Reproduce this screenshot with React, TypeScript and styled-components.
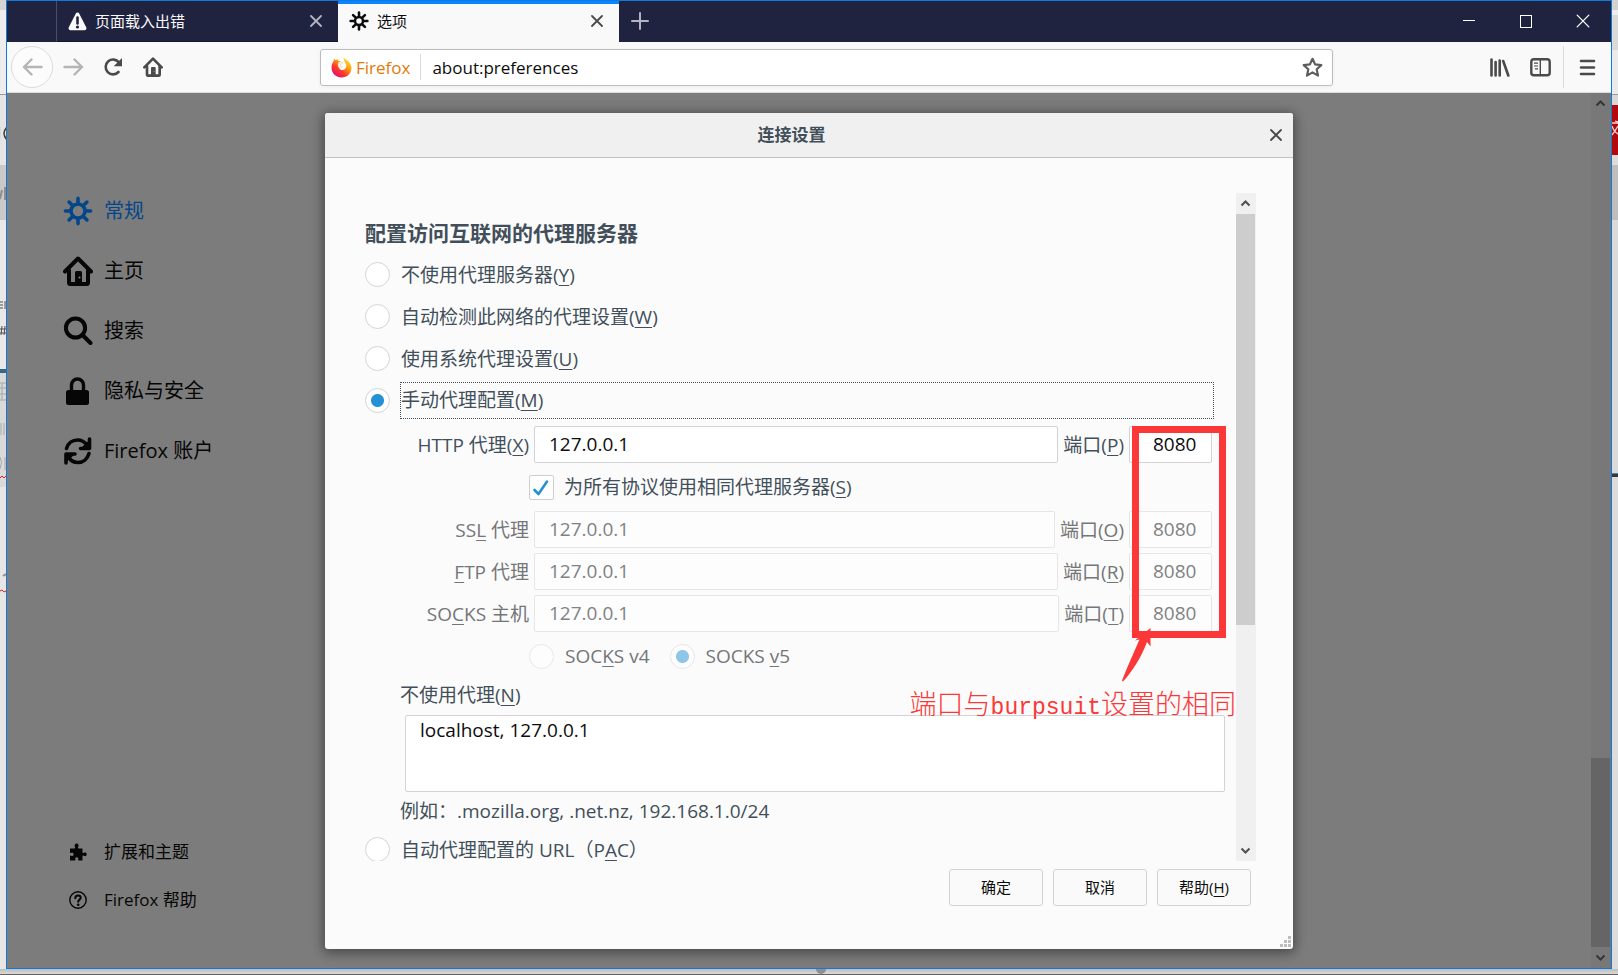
import React from "react";
import styled, { createGlobalStyle, css } from "styled-components";

const GlobalStyle = createGlobalStyle`
  *, *::before, *::after { box-sizing: border-box; }
  body {
    margin: 0;
    background: #e2e2e2;
    font-family: "Open Sans", "Noto Sans CJK SC", sans-serif;
    color: #424f5a;
  }
  button, input, textarea { font: inherit; color: inherit; margin: 0; }
  u { text-decoration-thickness: 1px; text-underline-offset: 3px; }
`;

/* ---------- desktop behind the window ---------- */

const Desktop = styled.div`
  height: 100vh;
  display: grid;
  grid-template-columns: 6px minmax(0, 1fr) 6px;
  grid-template-rows: minmax(0, 1fr) 6px;
  overflow: hidden;
`;

const EdgeStrip = styled.div`
  display: flex;
  flex-direction: column;
  overflow: hidden;
`;

const EdgeBlock = styled.div<{ $h?: number; $bg: string }>`
  ${(p) => (p.$h ? css`flex: 0 0 ${p.$h}px;` : css`flex: 1;`)}
  background: ${(p) => p.$bg};
  overflow: hidden;
`;

const EdgeArt = styled.svg`
  display: block;
`;

const BottomStrip = styled.div`
  grid-column: 1 / -1;
  display: flex;
  justify-content: center;
  background: linear-gradient(#bdbdbd, #dadada);
  border-bottom: 1px solid #606264;
`;

const BottomKnob = styled.i`
  width: 10px;
  height: 5px;
  margin-left: 24px;
  border-radius: 0 0 5px 5px;
  background: #8e8e8e;
`;

/* ---------- browser window ---------- */

const BrowserWindow = styled.div`
  display: flex;
  flex-direction: column;
  border: 1px solid #0f7bd8;
  background: #7c7c7c;
`;

const TabStrip = styled.header`
  flex: 0 0 41px;
  display: flex;
  background: #202340;
  padding-left: 49px;
`;

const Tab = styled.div<{ $active?: boolean }>`
  width: 282px;
  display: flex;
  align-items: center;
  gap: 8px;
  padding: 0 10px 0 11px;
  font-size: 15px;
  line-height: 20px;
  ${(p) =>
    p.$active
      ? css`
          width: 281px;
          background: #f9f9fa;
          color: #0c0c0d;
          border-bottom: 1px solid #f9f9fa;
          box-shadow: inset 0 3px 0 #0a84ff;
        `
      : css`
          color: #f9f9fa;
          border-left: 1px solid #4b4d66;
          border-bottom: 1px solid #14162c;
        `}
`;

const TabTitle = styled.span`
  flex: 1;
`;

const IconButton = styled.button<{ $w?: number; $h?: number; $color?: string }>`
  width: ${(p) => p.$w ?? 40}px;
  height: ${(p) => p.$h ?? 40}px;
  flex: none;
  padding: 0;
  border: 0;
  background: none;
  color: ${(p) => p.$color ?? "#4a4a4b"};
  display: flex;
  align-items: center;
  justify-content: center;
`;

const StripSpace = styled.div`
  flex: 1;
`;

const Toolbar = styled.div`
  flex: 0 0 51px;
  display: flex;
  align-items: center;
  padding: 0 4px;
  background: #f9f9fa;
  border-bottom: 1px solid #dcdcdd;
`;

const BackButton = styled(IconButton)`
  border: 1px solid #dcdcdc;
  border-radius: 50%;
  background: #fcfcfc;
`;

const ToolbarSpring = styled.div`
  flex: 147 1 0;
`;

const UrlBar = styled.div`
  flex: 992 1 0;
  height: 37px;
  display: flex;
  align-items: center;
  padding: 0 9px 0 10px;
  background: #fff;
  border: 1px solid #bdbdbe;
  border-radius: 3px;
  box-shadow: 0 1px 4px rgba(0, 0, 0, 0.06);
  font-size: 17px;
`;

const Identity = styled.div`
  display: flex;
  align-items: center;
  gap: 4px;
  height: 26px;
  padding-right: 10px;
  border-right: 1px solid #d9d9da;
  color: #e27a08;
`;

const UrlInput = styled.input`
  flex: 1;
  min-width: 0;
  height: 30px;
  border: 0;
  outline: 0;
  padding: 0 11px;
  background: none;
  color: #0c0c0d;
`;

const ToolbarDivider = styled.div`
  width: 1px;
  height: 42px;
  margin: 0 3px;
  background: #dcdcdd;
`;

/* ---------- preferences page ---------- */

const Stage = styled.main`
  flex: 1;
  min-height: 0;
  position: relative;
  display: flex;
  justify-content: space-between;
`;

const Sidebar = styled.nav`
  display: flex;
  flex-direction: column;
  justify-content: space-between;
  padding: 88px 0 44px 55px;
`;

const NavList = styled.div`
  display: flex;
  flex-direction: column;
`;

const NavLink = styled.a<{ $current?: boolean; $small?: boolean }>`
  display: flex;
  align-items: center;
  gap: 10px;
  height: ${(p) => (p.$small ? 48 : 60)}px;
  font-size: ${(p) => (p.$small ? 17 : 20)}px;
  line-height: 28px;
  color: ${(p) => (p.$current ? "#05468a" : "#060606")};
  text-decoration: none;
`;

const NavIcon = styled.span`
  width: 32px;
  display: flex;
  justify-content: center;
`;

const ScrollTrack = styled.div<{ $bg: string; $color: string }>`
  flex: 0 0 20px;
  display: flex;
  flex-direction: column;
  background: ${(p) => p.$bg};
  color: ${(p) => p.$color};
`;

const ScrollPart = styled.div<{ $grow: number; $bg?: string }>`
  flex: ${(p) => p.$grow} 1 0;
  margin-right: 1px;
  background: ${(p) => p.$bg ?? "transparent"};
`;

/* ---------- dialog ---------- */

const DialogLayer = styled.div`
  position: absolute;
  inset: 0;
  display: flex;
  justify-content: center;
  padding: 20px 20px 19px;
  pointer-events: none;
`;

const Dialog = styled.section`
  width: 100%;
  max-width: 968px;
  position: relative;
  display: flex;
  flex-direction: column;
  background: #fbfbfb;
  border-radius: 3px;
  box-shadow: 0 2px 12px 2px rgba(0, 0, 0, 0.42);
  pointer-events: auto;
`;

const DialogHeader = styled.header`
  flex: 0 0 45px;
  display: flex;
  align-items: center;
  background: #f0f0f0;
  border-bottom: 1px solid #c1c1c1;
  border-radius: 3px 3px 0 0;
`;

const DialogTitle = styled.h1`
  flex: 1;
  margin: 0;
  text-align: center;
  font-size: 17px;
  line-height: 24px;
  font-weight: 700;
`;

const ScrollRegion = styled.div`
  flex: 1;
  min-height: 0;
  display: flex;
  overflow: hidden;
  margin: 35px 37px 0 40px;
`;

const ScrollContent = styled.form`
  flex: 1;
  min-width: 0;
  padding: 26px 11px 0 0;
  font-size: 19px;
  line-height: 28px;
`;

const GroupTitle = styled.h2`
  margin: 0 0 9px;
  font-size: 21px;
  line-height: 28px;
  font-weight: 700;
`;

const RadioList = styled.div`
  display: flex;
  flex-direction: column;
  gap: 5px;
  margin-right: 11px;
`;

const Choice = styled.label<{ $dim?: boolean }>`
  display: flex;
  align-items: center;
  gap: 10px;
  height: 37px;
  color: ${(p) => (p.$dim ? "#747678" : "inherit")};
`;

const ChoiceText = styled.span<{ $focused?: boolean }>`
  ${(p) =>
    p.$focused &&
    css`
      flex: 1;
      height: 37px;
      line-height: 37px;
      outline: 1px dotted #424f5a;
      outline-offset: -1px;
    `}
  padding-left: 1px;
`;

const Radio = styled.input.attrs({ type: "radio" })`
  appearance: none;
  flex: none;
  width: 25px;
  height: 25px;
  border: 1px solid #d4d4d6;
  border-radius: 50%;
  background: #fff;
  &:checked {
    background: radial-gradient(circle, #2292d4 6px, #fff 7px);
  }
  &:disabled {
    opacity: 0.5;
  }
`;

const CheckWrap = styled.span`
  display: grid;
  & > * {
    grid-area: 1 / 1;
  }
`;

const Checkbox = styled.input.attrs({ type: "checkbox" })`
  appearance: none;
  width: 25px;
  height: 25px;
  border: 1px solid #cfcfd2;
  border-radius: 2px;
  background: #fff;
`;

const CheckMark = styled.svg`
  pointer-events: none;
`;

const Fields = styled.div`
  position: relative;
  display: flex;
  flex-direction: column;
  gap: 5px;
  margin: 7px 13px 0 35px;
`;

const FieldRow = styled.div<{ $dim?: boolean }>`
  display: flex;
  align-items: center;
  gap: 5px;
  height: 37px;
  color: ${(p) => (p.$dim ? "#747678" : "inherit")};
`;

const FieldLabel = styled.label`
  width: 129px;
  text-align: right;
  white-space: nowrap;
`;

const PortLabel = styled.label`
  white-space: nowrap;
`;

const TextField = styled.input<{ $port?: boolean }>`
  ${(p) =>
    p.$port
      ? css`
          flex: 0 0 83px;
          width: 83px;
          padding: 0 0 2px 23px;
        `
      : css`
          flex: 1;
          min-width: 0;
          padding: 0 14px 2px;
        `}
  height: 37px;
  border: 1px solid #d3d3d5;
  border-radius: 2px;
  background: #fff;
  color: #0c0c0d;
  &:disabled {
    border-color: #e6e6e7;
    background: #fdfdfd;
    color: #808284;
  }
`;

const OptionRow = styled.div`
  display: flex;
  align-items: center;
  gap: 20px;
  height: 38px;
  padding-left: 129px;
`;

const ExceptionBlock = styled.div`
  display: flex;
  flex-direction: column;
  margin: 6px 0 0 35px;
`;

const ExceptionBox = styled.textarea`
  display: block;
  height: 77px;
  margin: 6px 0 5px 5px;
  padding: 0 14px;
  border: 1px solid #d3d3d5;
  border-radius: 2px;
  background: #fff;
  color: #0c0c0d;
  resize: none;
  line-height: 28px;
`;

const PacChoice = styled(Choice)`
  margin-top: 6px;
`;

const Footer = styled.footer`
  display: flex;
  justify-content: flex-end;
  gap: 10px;
  padding: 8px 42px 43px;
`;

const DialogButton = styled.button`
  width: 94px;
  height: 37px;
  padding: 0 0 2px;
  border: 1px solid #d2d2d4;
  border-radius: 3px;
  background: #fafafa;
  color: #0c0c0d;
  font-size: 15px;
  line-height: 20px;
`;

const Grip = styled.svg`
  position: absolute;
  right: 2px;
  bottom: 2px;
`;

/* ---------- red annotation over the port column ---------- */

const MarkBox = styled.div`
  position: absolute;
  top: 0;
  right: -14px;
  width: 94px;
  height: 212px;
  border: 7px solid #fb3737;
  pointer-events: none;
`;

const MarkArrow = styled.svg`
  position: absolute;
  top: 202px;
  right: 60px;
`;

const MarkNote = styled.p`
  position: absolute;
  top: 263px;
  right: -24px;
  margin: 0;
  color: #fb3737;
  font-family: "Liberation Mono", "Noto Sans CJK SC", monospace;
  font-size: 27px;
  font-weight: 300;
  line-height: 36px;
  white-space: nowrap;
`;

const NoteLatin = styled.span`
  font-size: 23px;
  font-weight: 400;
`;

/* ---------- icons ---------- */

const Cross = ({ size = 12, width = 2 }: { size?: number; width?: number }) => (
  <svg width={size} height={size} viewBox="0 0 12 12" fill="none" stroke="currentColor" strokeWidth={width} strokeLinecap="round">
    <path d="M1 1 11 11M11 1 1 11" />
  </svg>
);

const Gear = ({ size, ring = 6, width = 3.6 }: { size: number; ring?: number; width?: number }) => (
  <svg width={size} height={size} viewBox="0 0 30 30" fill="none" stroke="currentColor" strokeLinecap="round" strokeWidth={width}>
    <circle cx="15" cy="15" r={ring + 1} />
    {[0, 45, 90, 135, 180, 225, 270, 315].map((a) => (
      <path key={a} d="M15 2.4V7" transform={`rotate(${a} 15 15)`} />
    ))}
  </svg>
);

const House = ({ size }: { size: number }) => (
  <svg width={size} height={size} viewBox="0 0 30 30" fill="none" stroke="currentColor" strokeWidth="4" strokeLinecap="round" strokeLinejoin="round">
    <path d="M2 15.5 15 2.5 28 15.5" />
    <path d="M6 14V26.5Q6 28 7.500 28H23.500Q25 28 25 26.500V14" />
    <path d="M12 16.500Q12 15 13.500 15H17.500Q19 15 19 16.500V28H12Z" fill="currentColor" stroke="none" />
    <circle cx="16.500" cy="21.500" r="1" fill="#8a8a8a" stroke="none" />
  </svg>
);

const Warning = () => (
  <svg width="19" height="19" viewBox="0 0 19 19">
    <path d="M9.500.6c.8 0 1.400.5 1.800 1.200l6.900 13.500c.7 1.500-.1 3-1.700 3h-14c-1.600 0-2.400-1.500-1.700-3L7.700 1.800C8.100 1.100 8.700.6 9.500.6Z" fill="#f9f9fa" />
    <path d="M9.500 5.500v6" stroke="#202340" strokeWidth="2.600" strokeLinecap="round" />
    <circle cx="9.500" cy="15" r="1.600" fill="#202340" />
  </svg>
);

const Arrow = ({ flip }: { flip?: boolean }) => (
  <svg width="21" height="18" viewBox="0 0 21 18" fill="none" stroke="currentColor" strokeWidth="2.400" strokeLinecap="round" strokeLinejoin="round">
    <path d={flip ? "M1.500 9H19M11.500 1.500 19 9l-7.500 7.500" : "M19.500 9H2M9.500 1.500 2 9l7.500 7.500"} />
  </svg>
);

const Reload = () => (
  <svg width="20" height="20" viewBox="0 0 20 20" fill="none" stroke="currentColor" strokeWidth="2.600" strokeLinecap="round">
    <path d="M15.500 15A7.400 7.400 0 1 1 16 5.500" />
    <path d="M19 1v8.300h-8.300Z" fill="currentColor" stroke="none" />
  </svg>
);

const FirefoxLogo = () => (
  <svg width="21" height="21" viewBox="0 0 20 20">
    <defs>
      <linearGradient id="fxBody" x1="0.850" y1="0.100" x2="0.200" y2="0.950">
        <stop offset="0" stopColor="#ffe030" />
        <stop offset="0.350" stopColor="#ff9a10" />
        <stop offset="0.650" stopColor="#fb3a2c" />
        <stop offset="1" stopColor="#e40b72" />
      </linearGradient>
    </defs>
    <path d="M12.200.5c.9 1.200 1.500 1.700 2.600 2.300 2.800 1.600 4.700 4.200 4.700 7.600 0 5.200-4.200 9.100-9.400 9.100-5.400 0-9.600-4-9.600-9.200 0-2.800.9-4.700 2-6.300l.3-2.300 1.700 1.500L6.300 1.800l.5 1.800c1 .1 1.900.4 2.600 1l1.900.6c-.4.9-1.200 1.400-2.300 1.700l-.2 1.400 2.100.8c-.5 1.200-1.600 1.500-3 1.500.5 1.300 2 2.100 3.700 1.700 2.100-.4 3.100-2 3-4.100-.1-2.300-2.900-4.400-2.400-7.700Z" fill="url(#fxBody)" />
    <path d="M7.200 5c1.300-.5 2.700-.3 4.100.2-.4.900-1.200 1.400-2.300 1.700l-.2 1.400 2.100.8c-.5 1.200-1.600 1.500-3 1.500-1.300-1.200-1.800-3.400-.7-5.600Z" fill="#fff0e6" />
  </svg>
);

const Star = () => (
  <svg width="21" height="21" viewBox="0 0 21 21" fill="none" stroke="#5d5d5e" strokeWidth="2.200" strokeLinejoin="round">
    <path d="m10.500 1.800 2.600 5.600 6.200.7-4.600 4.200 1.300 6.300-5.500-3.200L5 18.600l1.300-6.300L1.700 8.100l6.200-.7Z" />
  </svg>
);

const Library = () => (
  <svg width="20" height="19" viewBox="0 0 20 19" fill="none" stroke="currentColor" strokeWidth="2.600" strokeLinecap="round">
    <path d="M1.500 1.500v16M5.600 4v13.500M9.700 2.500v15M13.200 3l5.100 14.500" />
  </svg>
);

const SidebarIcon = () => (
  <svg width="21" height="19" viewBox="0 0 21 19" fill="none" stroke="currentColor" strokeWidth="2.400">
    <rect x="1.300" y="1.300" width="18.400" height="16" rx="2.600" />
    <path d="M10.300 2v15" strokeWidth="1.400" />
    <path d="M4 5.200h4M4 8h4M5 10.800h3" strokeWidth="1.200" />
  </svg>
);

const Menu = () => (
  <svg width="17" height="17" viewBox="0 0 17 17" stroke="currentColor" strokeWidth="2.600" strokeLinecap="round">
    <path d="M2 2h13M2 8.500h13M2 15h13" />
  </svg>
);

const Magnifier = () => (
  <svg width="30" height="30" viewBox="0 0 30 30" fill="none" stroke="currentColor" strokeWidth="4" strokeLinecap="round">
    <circle cx="12.500" cy="12" r="9.600" />
    <path d="m19.500 19 8 8" />
  </svg>
);

const Lock = () => (
  <svg width="28" height="30" viewBox="0 0 28 30">
    <path d="M7.500 14V9a6 6 0 0 1 12 0v5" fill="none" stroke="currentColor" strokeWidth="3.400" />
    <rect x="2" y="14" width="23" height="15" rx="2.500" fill="currentColor" />
  </svg>
);

const Sync = () => (
  <svg width="30" height="30" viewBox="0 0 30 30" fill="none" stroke="currentColor" strokeWidth="3.600" strokeLinecap="round">
    <path d="M3.500 12.500C5 7 9.500 4 14.500 4c4 0 7 1.600 9.500 5" />
    <path d="M26.500 3v9.500H17.500" strokeLinejoin="round" />
    <path d="M17.500 12.500 26.500 4v8.500Z" fill="currentColor" stroke="none" />
    <path d="M26 17.500C24.500 23 20 26.500 15 26.500c-4 0-7.500-2-9.500-5.500" />
    <path d="M3 27v-9h9" strokeLinejoin="round" />
    <path d="M12 18 3 26.500V18Z" fill="currentColor" stroke="none" />
  </svg>
);

const Puzzle = () => (
  <svg width="18" height="18" viewBox="0 0 18 18" fill="currentColor">
    <path d="M1 5.500h4.500c.8 0 .9-.6.500-1.200C5.300 3 5.600.5 7.600.5s2.300 2.500 1.600 3.800c-.4.6-.3 1.200.5 1.200h3.800v3.700c0 .8.7 1 1.300.6 1.300-.8 2.900-.2 2.900 1.500s-1.600 2.300-2.900 1.500c-.6-.4-1.300-.2-1.300.6v4H9.800c-.9 0-.8-.6-.6-1.200.4-1.300-.2-2-1.400-2s-1.900.7-1.400 2c.2.600.2 1.200-.7 1.200H1v-4.200c0-.8.6-.8 1.300-.5 1.300.5 2.300-.1 2.300-1.400S3.600 9.400 2.300 9.900C1.600 10.200 1 10.200 1 9.400Z" />
  </svg>
);

const Help = () => (
  <svg width="18" height="18" viewBox="0 0 18 18" fill="none" stroke="currentColor">
    <circle cx="9" cy="9" r="8.200" strokeWidth="1.400" />
    <path d="M6.300 7.200C6.300 5.400 7.400 4.500 9 4.500s2.700.9 2.700 2.300C11.700 8.600 9.200 8.700 9.200 10.800" strokeWidth="2" strokeLinecap="round" />
    <circle cx="9.200" cy="13.700" r="1.300" fill="currentColor" stroke="none" />
  </svg>
);

const Chevron = ({ down }: { down?: boolean }) => (
  <svg width="20" height="21" viewBox="0 0 20 21" fill="none" stroke="currentColor" strokeWidth="2">
    <path d={down ? "m5.500 8.500 4 4 4-4" : "m5.500 12.500 4-4 4 4"} />
  </svg>
);

/* ---------- page ---------- */

const mainNav = [
  { label: "常规", icon: <Gear size={30} />, current: true },
  { label: "主页", icon: <House size={30} /> },
  { label: "搜索", icon: <Magnifier /> },
  { label: "隐私与安全", icon: <Lock /> },
  { label: "Firefox 账户", icon: <Sync /> },
];

const LeftEdge = () => (
  <EdgeStrip aria-hidden>
    <EdgeBlock $h={10} $bg="#d4d4d4" />
    <EdgeBlock $h={84} $bg="#ededed" />
    <EdgeBlock $h={1} $bg="#9a9a9a" />
    <EdgeBlock $h={70} $bg="#e5e5e5">
      <EdgeArt width="6" height="70">
        <path d="M0 32v12" stroke="#a8dfe6" />
        <path d="M7 32q-6 6 0 13" fill="none" stroke="#4b3a22" strokeWidth="1.500" />
      </EdgeArt>
    </EdgeBlock>
    <EdgeBlock $h={55} $bg="#c9c9c9">
      <EdgeArt width="6" height="55">
        <path d="M0 34 2 25M5 22v13" fill="none" stroke="#8d8d8d" strokeWidth="2" />
      </EdgeArt>
    </EdgeBlock>
    <EdgeBlock $h={149} $bg="#e8e8e8">
      <EdgeArt width="6" height="149">
        <path d="M0 82h3M0 85h3M0 88h3M5 81v8M0 109h6M0 113h6M2 106l-1 9M5 106l-1 9" fill="none" stroke="#4d5158" />
      </EdgeArt>
    </EdgeBlock>
    <EdgeBlock $h={4} $bg="#33668a" />
    <EdgeBlock $h={114} $bg="#d9d9da">
      <EdgeArt width="6" height="114">
        <path d="M0 10h6M2 10v17M0 15h6M0 21h6M0 27h6M1 50v12M4 50v12M0 84q3 5 0 12M5 84v13" fill="none" stroke="#a3a8ad" />
        <path d="m0 105 2-2 2 2 2-2" fill="none" stroke="#dd2020" />
      </EdgeArt>
    </EdgeBlock>
    <EdgeBlock $bg="#e6e6e6">
      <EdgeArt width="6" height="110">
        <path d="m3 89 3-2" fill="none" stroke="#8d8d8d" strokeWidth="2" />
        <path d="m0 104 2-1 2 2 2-1" fill="none" stroke="#dd2020" />
      </EdgeArt>
    </EdgeBlock>
  </EdgeStrip>
);

const RightEdge = () => (
  <EdgeStrip aria-hidden>
    <EdgeBlock $h={10} $bg="#d2d2d2" />
    <EdgeBlock $h={5} $bg="#ededed" />
    <EdgeBlock $h={35} $bg="#d9d9d9" />
    <EdgeBlock $h={44} $bg="#ebebeb" />
    <EdgeBlock $h={1} $bg="#9a9a9a" />
    <EdgeBlock $h={10} $bg="#d8d8d8" />
    <EdgeBlock $h={50} $bg="#b4080f">
      <EdgeArt width="6" height="50">
        <path d="M3 16l3 1M0 18h6M0 21q2 6 6 8M6 21q-3 5-6 9" fill="none" stroke="#f0d8d8" strokeWidth="1.300" />
      </EdgeArt>
    </EdgeBlock>
    <EdgeBlock $h={10} $bg="#dcdcdc" />
    <EdgeBlock $h={55} $bg="#bebebe" />
    <EdgeBlock $h={253} $bg="#dadada" />
    <EdgeBlock $h={1} $bg="#4c86b0" />
    <EdgeBlock $h={3} $bg="#35383b" />
    <EdgeBlock $bg="#dcdcdc" />
  </EdgeStrip>
);

interface ProxyRowProps {
  id: string;
  label: React.ReactNode;
  port: string;
  disabled?: boolean;
}

const ProxyRow = ({ id, label, port, disabled }: ProxyRowProps) => (
  <FieldRow $dim={disabled}>
    <FieldLabel htmlFor={`${id}-host`}>{label}</FieldLabel>
    <TextField id={`${id}-host`} defaultValue="127.0.0.1" disabled={disabled} />
    <PortLabel htmlFor={`${id}-port`}>
      端口(<u>{port}</u>)
    </PortLabel>
    <TextField id={`${id}-port`} $port inputMode="numeric" defaultValue="8080" disabled={disabled} />
  </FieldRow>
);

export default function App() {
  return (
    <>
      <GlobalStyle />
      <Desktop>
        <LeftEdge />
        <BrowserWindow>
          <TabStrip>
            <Tab>
              <Warning />
              <TabTitle>页面载入出错</TabTitle>
              <IconButton $w={24} $h={24} $color="#b4b5c0" aria-label="关闭标签页"><Cross width={1.8} /></IconButton>
            </Tab>
            <Tab $active>
              <Gear size={20} ring={5} width={3.8} />
              <TabTitle>选项</TabTitle>
              <IconButton $w={24} $h={24} aria-label="关闭标签页"><Cross width={1.8} /></IconButton>
            </Tab>
            <IconButton $w={42} $color="#b4b5c0" aria-label="新建标签页">
              <svg width="18" height="18" stroke="currentColor" strokeWidth="2" strokeLinecap="round">
                <path d="M9 1v16M1 9h16" />
              </svg>
            </IconButton>
            <StripSpace />
            <IconButton $w={57} $color="#fff" aria-label="最小化">
              <svg width="12" height="12" stroke="currentColor"><path d="M0 5.500h12" /></svg>
            </IconButton>
            <IconButton $w={57} $color="#fff" aria-label="最大化">
              <svg width="12" height="13" fill="none" stroke="currentColor"><rect x="0.500" y="0.500" width="11" height="12" /></svg>
            </IconButton>
            <IconButton $w={57} $color="#fff" aria-label="关闭"><Cross size={14} width={1.1} /></IconButton>
          </TabStrip>

          <Toolbar>
            <BackButton $w={42} $h={42} $color="#b5b5b6" aria-label="后退"><Arrow /></BackButton>
            <IconButton $color="#b5b5b6" aria-label="前进"><Arrow flip /></IconButton>
            <IconButton aria-label="重新载入"><Reload /></IconButton>
            <IconButton aria-label="主页"><House size={20} /></IconButton>
            <ToolbarSpring />
            <UrlBar>
              <Identity>
                <FirefoxLogo />
                Firefox
              </Identity>
              <UrlInput aria-label="地址" defaultValue="about:preferences" />
              <Star />
            </UrlBar>
            <ToolbarSpring />
            <IconButton aria-label="书架"><Library /></IconButton>
            <IconButton aria-label="侧栏"><SidebarIcon /></IconButton>
            <ToolbarDivider />
            <IconButton aria-label="菜单"><Menu /></IconButton>
          </Toolbar>

          <Stage>
            <Sidebar>
              <NavList>
                {mainNav.map((n) => (
                  <NavLink key={n.label} href="#" $current={n.current}>
                    <NavIcon>{n.icon}</NavIcon>
                    {n.label}
                  </NavLink>
                ))}
              </NavList>
              <NavList>
                <NavLink href="#" $small><NavIcon><Puzzle /></NavIcon>扩展和主题</NavLink>
                <NavLink href="#" $small><NavIcon><Help /></NavIcon>Firefox 帮助</NavLink>
              </NavList>
            </Sidebar>
            <ScrollTrack $bg="#787878" $color="#353535">
              <Chevron />
              <ScrollPart $grow={644} />
              <ScrollPart $grow={189} $bg="#656565" />
              <Chevron down />
            </ScrollTrack>

            <DialogLayer>
              <Dialog role="dialog" aria-labelledby="dialog-title">
                <DialogHeader>
                  <DialogTitle id="dialog-title">连接设置</DialogTitle>
                  <IconButton $w={35} $h={35} aria-label="关闭"><Cross width={1.8} /></IconButton>
                </DialogHeader>

                <ScrollRegion>
                  <ScrollContent>
                    <GroupTitle>配置访问互联网的代理服务器</GroupTitle>
                    <RadioList>
                      <Choice>
                        <Radio name="mode" />
                        <ChoiceText>不使用代理服务器(<u>Y</u>)</ChoiceText>
                      </Choice>
                      <Choice>
                        <Radio name="mode" />
                        <ChoiceText>自动检测此网络的代理设置(<u>W</u>)</ChoiceText>
                      </Choice>
                      <Choice>
                        <Radio name="mode" />
                        <ChoiceText>使用系统代理设置(<u>U</u>)</ChoiceText>
                      </Choice>
                      <Choice>
                        <Radio name="mode" defaultChecked />
                        <ChoiceText $focused>手动代理配置(<u>M</u>)</ChoiceText>
                      </Choice>
                    </RadioList>

                    <Fields>
                      <ProxyRow id="http" label={<>HTTP 代理(<u>X</u>)</>} port="P" />
                      <OptionRow>
                        <Choice>
                          <CheckWrap>
                            <Checkbox defaultChecked />
                            <CheckMark width="25" height="25" viewBox="0 0 25 25" fill="none" stroke="#2292d4" strokeWidth="2.600" strokeLinecap="round" strokeLinejoin="round">
                              <path d="m5.500 15 4 4L18 6.500" />
                            </CheckMark>
                          </CheckWrap>
                          <span>为所有协议使用相同代理服务器(<u>S</u>)</span>
                        </Choice>
                      </OptionRow>
                      <ProxyRow id="ssl" label={<>SS<u>L</u> 代理</>} port="O" disabled />
                      <ProxyRow id="ftp" label={<><u>F</u>TP 代理</>} port="R" disabled />
                      <ProxyRow id="socks" label={<>SO<u>C</u>KS 主机</>} port="T" disabled />
                      <OptionRow>
                        <Choice $dim>
                          <Radio name="socks-version" disabled />
                          <ChoiceText>SOC<u>K</u>S v4</ChoiceText>
                        </Choice>
                        <Choice $dim>
                          <Radio name="socks-version" disabled defaultChecked />
                          <ChoiceText>SOCKS <u>v</u>5</ChoiceText>
                        </Choice>
                      </OptionRow>
                      <MarkBox />
                      <MarkArrow width="30" height="54" viewBox="0 0 30 54" fill="#fb3737">
                        <path d="M28.500 0v18.500l-3.500-4.500C20 28 10 44 1 53.500L0 52.500C5 40 12 24 17.500 11.500L13 12.500Z" />
                      </MarkArrow>
                      <MarkNote>
                        端口与<NoteLatin>burpsuit</NoteLatin>设置的相同
                      </MarkNote>
                    </Fields>

                    <ExceptionBlock>
                      <label htmlFor="no-proxy">不使用代理(<u>N</u>)</label>
                      <ExceptionBox id="no-proxy" defaultValue="localhost, 127.0.0.1" />
                      <span>例如：.mozilla.org, .net.nz, 192.168.1.0/24</span>
                    </ExceptionBlock>
                    <PacChoice>
                      <Radio name="mode" />
                      <ChoiceText>自动代理配置的 URL（P<u>A</u>C）</ChoiceText>
                    </PacChoice>
                  </ScrollContent>
                  <ScrollTrack $bg="#f0f0f0" $color="#505050">
                    <Chevron />
                    <ScrollPart $grow={411} $bg="#cdcdcd" />
                    <ScrollPart $grow={215} />
                    <Chevron down />
                  </ScrollTrack>
                </ScrollRegion>

                <Footer>
                  <DialogButton>确定</DialogButton>
                  <DialogButton>取消</DialogButton>
                  <DialogButton>帮助(<u>H</u>)</DialogButton>
                </Footer>
                <Grip width="11" height="11" fill="#bdbdbd" aria-hidden>
                  <path d="M8 0h3v3H8zM4 4h3v3H4zM8 4h3v3H8zM0 8h3v3H0zM4 8h3v3H4zM8 8h3v3H8z" />
                </Grip>
              </Dialog>
            </DialogLayer>
          </Stage>
        </BrowserWindow>
        <RightEdge />
        <BottomStrip>
          <BottomKnob />
        </BottomStrip>
      </Desktop>
    </>
  );
}
